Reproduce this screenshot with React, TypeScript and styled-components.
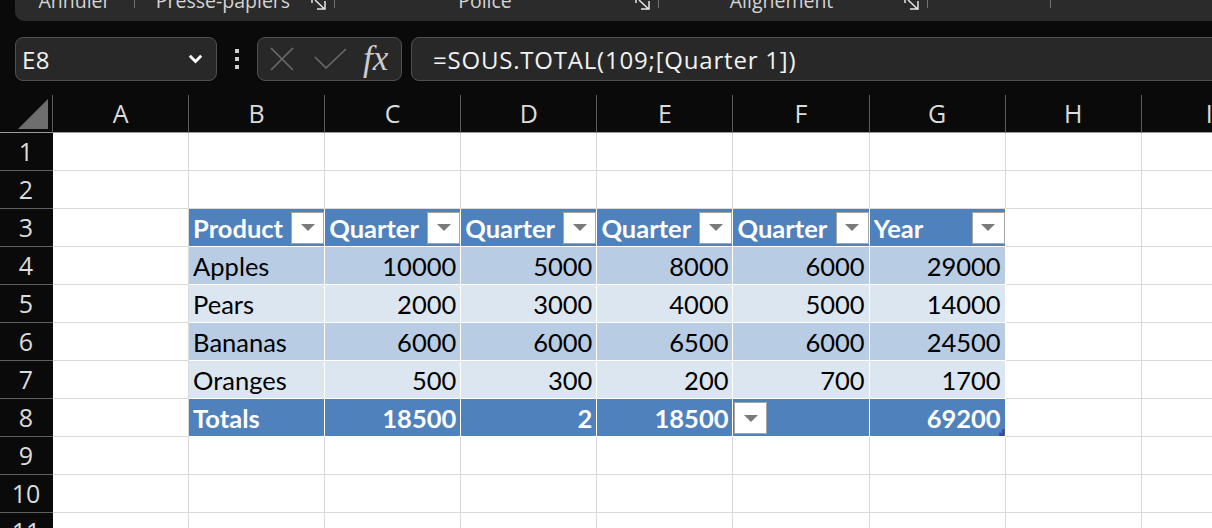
import React from 'react';
import styled, { createGlobalStyle, css } from 'styled-components';

const GlobalStyle = createGlobalStyle`
  html, body { margin: 0; padding: 0; background: #0a0a0a; }
  body { width: 1212px; height: 528px; overflow: hidden; font-family: "Open Sans", "Noto Sans", sans-serif; }
  * { box-sizing: border-box; }
`;

const Page = styled.div`
  width: 1212px;
  height: 528px;
  overflow: hidden;
  background: #0a0a0a;
  display: flex;
  flex-direction: column;
`;

/* ---------- Ribbon (cut-off group labels) ---------- */
const Ribbon = styled.div`
  margin-left: 15px;
  height: 21px;
  flex-shrink: 0;
  display: flex;
  background: #2b2b2b;
  border-bottom-left-radius: 9px;
  overflow: hidden;
`;

const RibbonGroup = styled.div<{ $w?: number }>`
  ${p => (p.$w ? css`width: ${p.$w}px; flex: 0 0 auto;` : css`flex: 1;`)}
  display: flex;
  align-items: flex-start;
  height: 100%;
`;

const GroupLabel = styled.span`
  flex: 1;
  text-align: center;
  white-space: nowrap;
  font-size: 19.5px;
  line-height: 20px;
  margin-top: -9px;
  color: #d4d4d4;
`;

const Launcher = styled.svg`
  width: 16px;
  height: 10px;
  margin-right: 7px;
  flex-shrink: 0;
`;

const Divider = styled.div`
  width: 1px;
  height: 8px;
  flex-shrink: 0;
  background: #707070;
`;

const LauncherIcon = () => (
  <Launcher viewBox="0 0 16 10">
    <path d="M1 0 V3 M4 0 L13 8.5 M6 9 H14 V1" stroke="#e6e6e6" strokeWidth="1.5" fill="none" />
  </Launcher>
);

/* ---------- Formula bar ---------- */
const FormulaRow = styled.div`
  display: flex;
  align-items: center;
  height: 44px;
  margin-top: 16px;
  padding-left: 15px;
  flex-shrink: 0;
`;

const boxLook = css`
  height: 44px;
  background: #282828;
  border: 1px solid #505050;
  border-radius: 8px;
  display: flex;
  align-items: center;
`;

const NameBox = styled.div`
  ${boxLook};
  width: 202px;
  padding: 0 13px 0 6px;
  justify-content: space-between;
  color: #f2f2f2;
  font-size: 24px;
  letter-spacing: 0.5px;
`;

const DotsHandle = styled.div`
  width: 40px;
  height: 44px;
  display: flex;
  flex-direction: column;
  align-items: center;
  justify-content: center;
  gap: 4px;
`;

const Dot = styled.span`
  width: 4px;
  height: 4px;
  background: #cfcfcf;
`;

const FxBox = styled.div`
  ${boxLook};
  width: 145px;
  padding-left: 12px;
  gap: 20px;
`;

const FxGlyph = styled.span`
  font-family: "Liberation Serif", "DejaVu Serif", serif;
  font-style: italic;
  font-size: 35px;
  color: #cdcdcd;
  margin-left: -4px;
  margin-top: -2px;
  line-height: 1;
`;

const FormulaBox = styled.div`
  ${boxLook};
  flex: 1;
  margin-left: 9px;
  margin-right: -20px;
  padding-left: 21px;
  color: #f2f2f2;
  font-size: 24px;
  letter-spacing: 0.8px;
  white-space: nowrap;
`;

/* ---------- Sheet grid ---------- */
const Sheet = styled.div`
  margin-top: 14px;
  display: grid;
  grid-template-columns: 53px repeat(9, 136.1px);
  grid-auto-rows: 38px;
`;

const Corner = styled.div`
  border-bottom: 1px solid #9a9a9a;
  border-right: 1px solid #5c5c5c;
  display: flex;
  align-items: flex-end;
  justify-content: flex-end;
  padding: 0 4px 3px 0;
`;

const ColHead = styled.div`
  border-bottom: 1px solid #9a9a9a;
  border-right: 1px solid #5c5c5c;
  color: #dcdcdc;
  font-size: 25px;
  line-height: 37px;
  text-align: center;
`;

const RowHead = styled.div`
  border-bottom: 1px solid #5f5f5f;
  color: #dcdcdc;
  font-size: 25px;
  line-height: 37px;
  text-align: center;
  padding-right: 1px;
`;

type Tone = 'plain' | 'head' | 'band1' | 'band2' | 'total';

const toneBg: Record<Tone, string> = {
  plain: '#ffffff',
  head: '#4f81bd',
  band1: '#b8cce4',
  band2: '#dce6f1',
  total: '#4f81bd',
};

const Cell = styled.div<{ $tone: Tone; $right?: boolean }>`
  position: relative;
  background: ${p => toneBg[p.$tone]};
  border-right: 1px solid ${p => (p.$tone === 'plain' ? '#dadada' : '#ffffff')};
  border-bottom: 1px solid ${p => (p.$tone === 'plain' ? '#dadada' : '#ffffff')};
  font-family: Lato, "Liberation Sans", sans-serif;
  font-size: 25.5px;
  line-height: 35px;
  white-space: nowrap;
  overflow: hidden;
  padding: 2px 4px 0 4px;
  text-align: ${p => (p.$right ? 'right' : 'left')};
  color: ${p => (p.$tone === 'head' || p.$tone === 'total' ? '#ffffff' : '#000000')};
  font-weight: ${p => (p.$tone === 'head' || p.$tone === 'total' ? 700 : 400)};
  display: flex;
  align-items: center;
  justify-content: ${p => (p.$right ? 'flex-end' : 'flex-start')};
`;

const HeadCell = styled(Cell)`
  padding-right: 0;
  padding-top: 1px;
`;

const HeadText = styled.span`
  flex: 1;
  min-width: 0;
  overflow: hidden;
  margin-right: 5px;
`;

const FilterButton = styled.div<{ $left?: boolean }>`
  width: 33px;
  height: 32px;
  flex-shrink: 0;
  background: #ffffff;
  border: 1px solid #a6a6a6;
  display: flex;
  align-items: center;
  justify-content: center;
  margin-left: ${p => (p.$left ? '-3px' : '0')};
  margin-top: -1px;
`;

const FilterArrow = styled.span`
  width: 0;
  height: 0;
  border-left: 7px solid transparent;
  border-right: 7px solid transparent;
  border-top: 7px solid #7a7a7a;
`;

const ResizeHandle = styled.span`
  position: absolute;
  right: 0;
  bottom: 0;
  width: 6px;
  height: 7px;
  background: #3d4ba6;
  clip-path: polygon(100% 0, 100% 100%, 0 100%, 0 55%, 55% 55%, 55% 0);
`;

const headers = ['Product', 'Quarter 1', 'Quarter 2', 'Quarter 3', 'Quarter 4', 'Year'];
const data: (string | number)[][] = [
  ['Apples', 10000, 5000, 8000, 6000, 29000],
  ['Pears', 2000, 3000, 4000, 5000, 14000],
  ['Bananas', 6000, 6000, 6500, 6000, 24500],
  ['Oranges', 500, 300, 200, 700, 1700],
];
const totals: (string | number | null)[] = ['Totals', 18500, 2, 18500, null, 69200];
const columns = ['A', 'B', 'C', 'D', 'E', 'F', 'G', 'H', 'I'];

function renderRow(r: number) {
  const cells: React.ReactNode[] = [];
  cells.push(<RowHead key={`rh${r}`}>{r}</RowHead>);
  cells.push(<Cell key={`a${r}`} $tone="plain" />);
  for (let c = 0; c < 6; c++) {
    const key = `c${r}-${c}`;
    if (r === 3) {
      cells.push(
        <HeadCell key={key} $tone="head">
          <HeadText>{headers[c]}</HeadText>
          <FilterButton>
            <FilterArrow />
          </FilterButton>
        </HeadCell>
      );
    } else if (r >= 4 && r <= 7) {
      const v = data[r - 4][c];
      cells.push(
        <Cell key={key} $tone={r % 2 === 0 ? 'band1' : 'band2'} $right={c > 0}>
          {v}
        </Cell>
      );
    } else if (r === 8) {
      const v = totals[c];
      if (v === null) {
        cells.push(
          <Cell key={key} $tone="total">
            <FilterButton $left>
              <FilterArrow />
            </FilterButton>
          </Cell>
        );
      } else {
        cells.push(
          <Cell key={key} $tone="total" $right={c > 0}>
            {v}
            {c === 5 && <ResizeHandle />}
          </Cell>
        );
      }
    } else {
      cells.push(<Cell key={key} $tone="plain" />);
    }
  }
  cells.push(<Cell key={`h${r}`} $tone="plain" />);
  cells.push(<Cell key={`i${r}`} $tone="plain" />);
  return cells;
}

export default function App() {
  return (
    <Page>
      <GlobalStyle />
      <Ribbon>
        <RibbonGroup $w={119}>
          <GroupLabel>Annuler</GroupLabel>
        </RibbonGroup>
        <Divider />
        <RibbonGroup $w={199}>
          <GroupLabel>Presse-papiers</GroupLabel>
          <LauncherIcon />
        </RibbonGroup>
        <Divider />
        <RibbonGroup $w={323}>
          <GroupLabel>Police</GroupLabel>
          <LauncherIcon />
        </RibbonGroup>
        <Divider />
        <RibbonGroup $w={268}>
          <GroupLabel>Alignement</GroupLabel>
          <LauncherIcon />
        </RibbonGroup>
        <Divider />
        <RibbonGroup $w={122} />
        <Divider />
        <RibbonGroup />
      </Ribbon>

      <FormulaRow>
        <NameBox>
          <span>E8</span>
          <svg width="15" height="10" viewBox="0 0 15 10">
            <polyline points="1.8,1.8 7.5,7.5 13.2,1.8" stroke="#ffffff" strokeWidth="2.8" fill="none" />
          </svg>
        </NameBox>
        <DotsHandle>
          <Dot />
          <Dot />
          <Dot />
        </DotsHandle>
        <FxBox>
          <svg width="24" height="24" viewBox="0 0 24 24">
            <path d="M1 1 L23 23 M23 1 L1 23" stroke="#6b6b6b" strokeWidth="1.6" fill="none" />
          </svg>
          <svg width="33" height="22" viewBox="0 0 33 22">
            <polyline points="1,9 12,20 32,1" stroke="#6b6b6b" strokeWidth="1.6" fill="none" />
          </svg>
          <FxGlyph>fx</FxGlyph>
        </FxBox>
        <FormulaBox>=SOUS.TOTAL(109;[Quarter 1])</FormulaBox>
      </FormulaRow>

      <Sheet>
        <Corner>
          <svg width="30" height="30" viewBox="0 0 30 30">
            <polygon points="30,0 30,30 0,30" fill="#6e6e6e" />
          </svg>
        </Corner>
        {columns.map(c => (
          <ColHead key={c}>{c}</ColHead>
        ))}
        {Array.from({ length: 11 }, (_, i) => renderRow(i + 1))}
      </Sheet>
    </Page>
  );
}
